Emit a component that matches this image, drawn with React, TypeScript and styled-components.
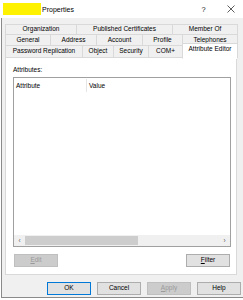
import React from "react";
import styled, { createGlobalStyle } from "styled-components";

const Global = createGlobalStyle`
  html, body { margin: 0; padding: 0; background: #ffffff; }
  body { font-family: "Liberation Sans", Arial, sans-serif; }
  * { box-sizing: border-box; }
`;

const Window = styled.div`
  width: 243px;
  height: 298px;
  margin-left: 1px;
  border-left: 1px solid #8a8a8a;
  border-bottom: 1px solid #8a8a8a;
  background: #f0f0f0;
  display: flex;
  flex-direction: column;
  font-size: 6.5px;
  color: #000;
`;

const TitleBar = styled.div`
  height: 18px;
  background: #ffffff;
  display: flex;
  align-items: center;
  padding-left: 1px;
  margin-left: -1px;
`;

const Redaction = styled.div`
  width: 38px;
  height: 12px;
  background: #fff200;
  margin-left: 1px;
  margin-right: 1px;
`;

const TitleText = styled.span`
  font-size: 7px;
  flex: 1;
`;

const TitleButton = styled.span`
  width: 27px;
  display: flex;
  justify-content: center;
  align-items: center;
  font-size: 7.5px;
  color: #222;
`;

const Body = styled.div`
  flex: 1;
  display: flex;
  flex-direction: column;
  padding: 6px 0 0 3px;
`;

const TabRow = styled.div<{ $h: number }>`
  display: flex;
  height: ${(p) => p.$h}px;
  margin-top: -1px;
  &:first-child { margin-top: 0; }
`;

const Tab = styled.div<{ $w: number; $active?: boolean }>`
  width: ${(p) => p.$w + 1}px;
  margin-left: -1px;
  &:first-child { margin-left: 0; }
  border: 1px solid #d9d9d9;
  background: ${(p) => (p.$active ? "#ffffff" : "#f0f0f0")};
  display: flex;
  align-items: center;
  justify-content: center;
  white-space: nowrap;
  line-height: 1;
  ${(p) =>
    p.$active
      ? `margin-top: -2px; border-bottom-color: #ffffff; position: relative; z-index: 1; align-items: flex-start; padding-top: 2px; height: calc(100% + 3px);`
      : ``}
`;

const Panel = styled.div`
  width: 232px;
  height: 218px;
  margin-top: -1px;
  background: #ffffff;
  border: 1px solid #d9d9d9;
  padding: 7px 5px 6px 7px;
  display: flex;
  flex-direction: column;
`;

const Label = styled.div`
  line-height: 10px;
  height: 10px;
  margin-bottom: 2px;
`;

const ListBox = styled.div`
  height: 170px;
  border: 1px solid #a0a0a0;
  display: flex;
  flex-direction: column;
`;

const HeaderRow = styled.div`
  display: flex;
  height: 15px;
  align-items: stretch;
`;

const HeaderCell = styled.div<{ $w?: number }>`
  ${(p) => (p.$w ? `width: ${p.$w}px;` : "flex: 1;")}
  padding-left: 2px;
  display: flex;
  align-items: center;
  border-right: ${(p) => (p.$w ? "1px solid #e5e5e5" : "none")};
  margin: 1px 0;
`;

const ListSpace = styled.div`
  flex: 1;
`;

const HScroll = styled.div`
  height: 11px;
  background: #f0f0f0;
  display: flex;
  align-items: center;
`;

const Arrow = styled.div`
  width: 11px;
  height: 11px;
  display: flex;
  align-items: center;
  justify-content: center;
  color: #606060;
`;

const Track = styled.div`
  flex: 1;
  height: 100%;
  display: flex;
  align-items: center;
`;

const Thumb = styled.div`
  width: 113px;
  height: 9px;
  background: #cdcdcd;
`;

const PanelButtons = styled.div`
  margin-top: 7px;
  display: flex;
  justify-content: space-between;
  padding: 0 1px 0 1px;
`;

const Button = styled.div<{ $disabled?: boolean; $default?: boolean }>`
  width: 44px;
  height: 13px;
  display: flex;
  align-items: center;
  justify-content: center;
  background: ${(p) => (p.$disabled ? "#cccccc" : "#e1e1e1")};
  border: 1px solid
    ${(p) => (p.$default ? "#0078d7" : p.$disabled ? "#bfbfbf" : "#adadad")};
  color: ${(p) => (p.$disabled ? "#9a9a9a" : "#000")};
  line-height: 1;
`;

const Footer = styled.div`
  display: flex;
  justify-content: flex-end;
  gap: 6px;
  padding: 7px 3px 0 0;
`;

const Close = () => (
  <svg width="8" height="8" viewBox="0 0 8 8">
    <path d="M0.5 0.5 L7.5 7.5 M7.5 0.5 L0.5 7.5" stroke="#333" strokeWidth="0.8" fill="none" />
  </svg>
);

const row1: [string, number][] = [
  ["Organization", 71],
  ["Published Certificates", 96],
  ["Member Of", 65],
];
const row2: [string, number][] = [
  ["General", 45],
  ["Address", 46],
  ["Account", 46],
  ["Profile", 40],
  ["Telephones", 55],
];
const row3: [string, number][] = [
  ["Password Replication", 77],
  ["Object", 31],
  ["Security", 35],
  ["COM+", 34],
  ["Attribute Editor", 55],
];

export default function App() {
  return (
    <>
      <Global />
      <Window>
        <TitleBar>
          <Redaction />
          <TitleText>Properties</TitleText>
          <TitleButton>?</TitleButton>
          <TitleButton>
            <Close />
          </TitleButton>
        </TitleBar>
        <Body>
          <TabRow $h={11}>
            {row1.map(([t, w]) => (
              <Tab key={t} $w={w}>{t}</Tab>
            ))}
          </TabRow>
          <TabRow $h={12}>
            {row2.map(([t, w]) => (
              <Tab key={t} $w={w}>{t}</Tab>
            ))}
          </TabRow>
          <TabRow $h={13}>
            {row3.map(([t, w]) => (
              <Tab key={t} $w={w} $active={t === "Attribute Editor"}>{t}</Tab>
            ))}
          </TabRow>
          <Panel>
            <Label>Attributes:</Label>
            <ListBox>
              <HeaderRow>
                <HeaderCell $w={73}>Attribute</HeaderCell>
                <HeaderCell>Value</HeaderCell>
              </HeaderRow>
              <ListSpace />
              <HScroll>
                <Arrow>‹</Arrow>
                <Track>
                  <Thumb />
                </Track>
                <Arrow>›</Arrow>
              </HScroll>
            </ListBox>
            <PanelButtons>
              <Button $disabled>
                <span><u>E</u>dit</span>
              </Button>
              <Button>
                <span><u>F</u>ilter</span>
              </Button>
            </PanelButtons>
          </Panel>
          <Footer>
            <Button $default>OK</Button>
            <Button>Cancel</Button>
            <Button $disabled>
              <span><u>A</u>pply</span>
            </Button>
            <Button>Help</Button>
          </Footer>
        </Body>
      </Window>
    </>
  );
}
